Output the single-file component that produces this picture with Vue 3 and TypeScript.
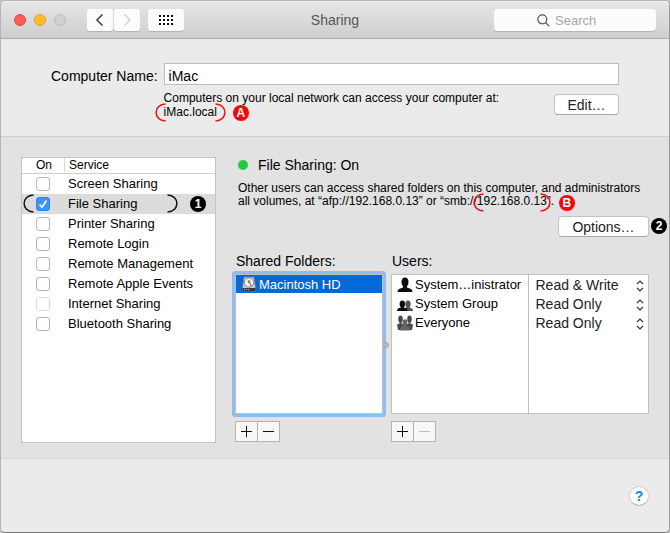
<script setup lang="ts">
import { ref } from 'vue'

interface Service {
  name: string
  on: boolean
  dim?: boolean
}

interface Member {
  name: string
  kind: 'user' | 'group' | 'everyone'
  access: string
}

const computerName = ref('iMac')
const search = ref('')
const selected = ref('File Sharing')
const levels = ['Read & Write', 'Read Only']

const services = ref<Service[]>([
  { name: 'Screen Sharing', on: false },
  { name: 'File Sharing', on: true },
  { name: 'Printer Sharing', on: false },
  { name: 'Remote Login', on: false },
  { name: 'Remote Management', on: false },
  { name: 'Remote Apple Events', on: false },
  { name: 'Internet Sharing', on: false, dim: true },
  { name: 'Bluetooth Sharing', on: false },
])

const members = ref<Member[]>([
  { name: 'System…inistrator', kind: 'user', access: 'Read & Write' },
  { name: 'System Group', kind: 'group', access: 'Read Only' },
  { name: 'Everyone', kind: 'everyone', access: 'Read Only' },
])
</script>

<template>
  <main class="window">
    <header class="titlebar">
      <div class="left-tools">
        <div class="lights">
          <button class="light close" aria-label="Close"></button>
          <button class="light minimize" aria-label="Minimize"></button>
          <button class="light zoom" aria-label="Zoom" disabled></button>
        </div>
        <div class="nav">
          <button class="tool" aria-label="Back">
            <svg width="10" height="14" viewBox="0 0 10 14"><path d="M7.500 1.500 2 7l5.500 5.500" fill="none" stroke="#4a4a4a" stroke-width="1.700" /></svg>
          </button>
          <button class="tool" aria-label="Forward" disabled>
            <svg width="10" height="14" viewBox="0 0 10 14"><path d="M2.500 1.500 8 7l-5.500 5.500" fill="none" stroke="#cfcfcf" stroke-width="1.300" /></svg>
          </button>
        </div>
        <button class="tool wide" aria-label="Show All">
          <svg width="14" height="10" viewBox="0 0 14 10" fill="#111">
            <template v-for="r in 3" :key="r">
              <rect v-for="c in 4" :key="c" :x="(c - 1) * 4" :y="(r - 1) * 4" width="2" height="2" />
            </template>
          </svg>
        </button>
      </div>
      <h1>Sharing</h1>
      <label class="search">
        <svg width="13" height="13" viewBox="0 0 13 13" fill="none" stroke="#555" stroke-width="1.200">
          <circle cx="5.300" cy="5.300" r="4.500" />
          <path d="m8.500 8.500 3.800 3.800" />
        </svg>
        <input v-model="search" type="text" placeholder="Search" aria-label="Search" />
      </label>
    </header>

    <section class="identity">
      <label for="computer-name" class="name-label">Computer Name:</label>
      <div class="name-fields">
        <input id="computer-name" v-model="computerName" type="text" />
        <div class="name-note">
          <p>
            Computers on your local network can access your computer at:<br />
            <span class="marked red">
              iMac.local
              <svg class="arc start" viewBox="0 0 11 19"><path d="M10.500 1C-2 1.500-2 17.500 10.500 18" /></svg>
              <svg class="arc end" viewBox="0 0 11 19"><path d="M.5 1C13 1.500 13 17.500.5 18" /></svg>
              <b class="badge">A</b>
            </span>
          </p>
          <button class="push">Edit…</button>
        </div>
      </div>
    </section>

    <section class="body">
      <div class="services">
        <table>
          <thead>
            <tr><th class="on">On</th><th><span>Service</span></th></tr>
          </thead>
          <tbody>
            <tr v-for="(s, i) in services" :key="s.name" :class="{ current: s.name === selected }" @click="selected = s.name">
              <td class="on">
                <input :id="'service-' + i" v-model="s.on" type="checkbox" :class="{ dim: s.dim }" />
              </td>
              <td>
                <label :for="'service-' + i">{{ s.name }}</label>
                <template v-if="s.name === selected">
                  <svg class="arc start" viewBox="0 0 11 19"><path d="M10.500 1C-2 1.500-2 17.500 10.500 18" /></svg>
                  <svg class="arc end" viewBox="0 0 11 19"><path d="M.5 1C13 1.500 13 17.500.5 18" /></svg>
                  <b class="badge">1</b>
                </template>
              </td>
            </tr>
          </tbody>
        </table>
      </div>

      <div class="detail">
        <h2><i class="status"></i>File Sharing: On</h2>
        <p class="about">
          Other users can access shared folders on this computer, and administrators<br />
          all volumes, at “afp://192.168.0.13” or “smb://<span class="marked red">192.168.0.13<svg class="arc start" viewBox="0 0 11 19"><path d="M10.500 1C-2 1.500-2 17.500 10.500 18" /></svg><svg class="arc end" viewBox="0 0 11 19"><path d="M.5 1C13 1.500 13 17.500.5 18" /></svg><b class="badge">B</b></span>”.
        </p>
        <div class="options">
          <button class="push">Options…</button>
          <b class="badge">2</b>
        </div>

        <div class="panes">
          <div class="folders">
            <h3>Shared Folders:</h3>
            <div class="box focused">
              <button class="folder">
                <svg width="14" height="16" viewBox="0 0 14 16">
                  <path d="M2 1h10l1.500 10v4H.5v-4z" fill="#c9c9c9" stroke="#777" stroke-width=".8" />
                  <path d="M.5 12h13v3H.5z" fill="#353b40" />
                  <ellipse cx="7" cy="6.500" rx="4.600" ry="4.500" fill="#f5f5f5" stroke="#777" stroke-width=".8" />
                  <circle cx="7" cy="5.500" r="1.300" fill="#777" />
                  <path d="m7 6 2.500 4" stroke="#555" />
                  <path d="M2 13.500h6" stroke="#bbb" stroke-dasharray="1 1" />
                </svg>
                Macintosh HD
              </button>
              <i class="grip"></i>
            </div>
            <div class="pair">
              <button aria-label="Add folder"><svg width="11" height="11"><path d="M0 5.500h11M5.500 0v11" /></svg></button>
              <button aria-label="Remove folder"><svg width="11" height="11"><path d="M0 5.500h11" /></svg></button>
            </div>
          </div>

          <div class="users">
            <h3>Users:</h3>
            <div class="box">
              <table>
                <tbody>
                  <tr v-for="m in members" :key="m.name">
                    <td class="who">
                      <div>
                        <svg v-if="m.kind === 'user'" width="16" height="16" viewBox="0 0 16 16" fill="#0a0a0a">
                          <ellipse cx="8" cy="5" rx="3.500" ry="4.500" />
                          <path d="M6 8h4v2.500l4 1.500q1.500.8 1.500 3H.5q0-2.200 1.500-3l4-1.500z" />
                        </svg>
                        <svg v-else-if="m.kind === 'group'" width="16" height="16" viewBox="0 0 16 16">
                          <g fill="#555"><ellipse cx="11" cy="8" rx="2.700" ry="3.500" /><path d="M9.500 10h3v1.500l2.500 1q1 .5 1 2.500H8z" /></g>
                          <g fill="#0a0a0a"><ellipse cx="5.300" cy="8" rx="2.700" ry="3.500" /><path d="M4 10h3v1.500l2.500 1q1 .5 1 2.500H0q0-2 1-2.500l3-1z" /></g>
                        </svg>
                        <svg v-else width="16" height="16" viewBox="0 0 16 16">
                          <g fill="#4a4a4a">
                            <ellipse cx="3.500" cy="4" rx="2.300" ry="3.500" /><ellipse cx="12.500" cy="4" rx="2.300" ry="3.500" />
                            <path d="M2.500 6h2v2.500L7 10v5H1L0 9.500l2.500-1zM11.500 6h2v2.500l2.500 1L15 15H9v-5l2.500-1.500z" />
                          </g>
                          <g fill="#666"><path d="M6.500 9h3v2l2.500 1q1 .5 1 3.500H3q0-3 1-3.500l2.500-1z" /><ellipse cx="8" cy="7.500" rx="2.400" ry="3.200" /></g>
                        </svg>
                        {{ m.name }}
                      </div>
                    </td>
                    <td class="access">
                      <div>
                        <select v-model="m.access" :aria-label="'Access for ' + m.name">
                          <option v-for="l in levels" :key="l">{{ l }}</option>
                        </select>
                        <svg width="8" height="12" viewBox="0 0 8 12"><path d="m1 4 3-3 3 3M1 8l3 3 3-3" fill="none" stroke="#333" stroke-width="1.200" /></svg>
                      </div>
                    </td>
                  </tr>
                  <tr class="rest"><td></td><td class="access"></td></tr>
                </tbody>
              </table>
            </div>
            <div class="pair">
              <button aria-label="Add user"><svg width="11" height="11"><path d="M0 5.500h11M5.500 0v11" /></svg></button>
              <button aria-label="Remove user" disabled><svg width="11" height="11"><path d="M0 5.500h11" /></svg></button>
            </div>
          </div>
        </div>
      </div>
    </section>

    <footer>
      <button class="help" aria-label="Help">?</button>
    </footer>
  </main>
</template>

<style>
body {
  background: #c4c4c4;
}
</style>

<style scoped>
* {
  box-sizing: border-box;
}
.window {
  display: flex;
  flex-direction: column;
  min-height: 100vh;
  border: 1px solid #b4b4b4;
  border-right-color: #999;
  border-bottom-color: #777;
  border-radius: 5px;
  overflow: hidden;
  background: #ebebeb;
  color: #000;
  font-family: "Liberation Sans", Arial, sans-serif;
  font-size: 14px;
}
button,
input,
select {
  margin: 0;
  padding: 0;
  font: inherit;
  color: inherit;
}
h1,
h2,
h3,
p {
  margin: 0;
  font-size: 14px;
  font-weight: normal;
}
table {
  width: 100%;
  border-collapse: collapse;
}
td,
th {
  padding: 0;
  font-weight: normal;
  text-align: left;
}

.titlebar {
  display: grid;
  grid-template-columns: 1fr auto 1fr;
  align-items: center;
  height: 38px;
  padding: 0 13px;
  border-top: 1px solid #f2f2f2;
  border-bottom: 1px solid #acacac;
  background: linear-gradient(#e6e6e6, #cecece);
}
.left-tools {
  display: flex;
  align-items: center;
}
.lights {
  display: flex;
  gap: 8px;
  margin-right: 21px;
}
.light {
  width: 12px;
  height: 12px;
  border: 1px solid;
  border-radius: 50%;
}
.close {
  background: #ff5f57;
  border-color: #e2463f;
}
.minimize {
  background: #ffbd2e;
  border-color: #e0a028;
}
.zoom {
  background: #d0d0d0;
  border-color: #bcbcbc;
}
.nav {
  display: flex;
  gap: 1px;
  margin-right: 8px;
}
.tool {
  display: flex;
  align-items: center;
  justify-content: center;
  width: 26px;
  height: 22px;
  border: 0;
  border-radius: 3px;
  background: #fcfcfc;
  box-shadow: 0 1px 0 #b5b5b5;
}
.wide {
  width: 36px;
}
h1 {
  color: #555;
}
.search {
  justify-self: end;
  display: flex;
  align-items: center;
  justify-content: center;
  gap: 5px;
  width: 162px;
  height: 22px;
  border-radius: 4px;
  background: #fcfcfc;
  box-shadow: 0 1px 0 #b5b5b5;
}
.search input {
  width: 58px;
  border: 0;
  background: none;
  font-size: 13px;
  outline: none;
}
.search input::placeholder {
  color: #a8a8a8;
  opacity: 1;
}

.identity {
  display: flex;
  gap: 6px;
  padding: 24px 50px 17px;
  border-bottom: 1px solid #d0d0d0;
}
.name-label {
  line-height: 26px;
  white-space: nowrap;
}
.name-fields {
  flex: 1;
}
.name-fields input {
  display: block;
  width: 100%;
  height: 22px;
  padding: 3px 4px 0;
  border: 1px solid #bcbcbc;
  background: #fff;
  outline: none;
}
.name-note {
  display: flex;
  justify-content: space-between;
  align-items: flex-start;
  padding-top: 6px;
}
.name-note p {
  font-size: 12px;
  line-height: 14px;
}
.name-note .push {
  width: 65px;
  margin-top: 3px;
}
.push {
  height: 21px;
  border: 1px solid #c2c2c2;
  border-bottom-color: #a8a8a8;
  border-radius: 4px;
  background: #fff;
  color: #222;
  line-height: 18px;
}

.marked {
  position: relative;
  display: inline-block;
}
.arc {
  position: absolute;
  width: 11px;
  height: 19px;
  fill: none;
  stroke: #111;
  stroke-width: 1.5;
}
.red .arc {
  top: -2px;
  stroke: #f50c0c;
}
.red .start {
  left: -9px;
}
.red .end {
  right: -9px;
}
.badge {
  position: absolute;
  width: 16px;
  height: 16px;
  border-radius: 50%;
  background: #000;
  color: #fff;
  font-size: 12px;
  line-height: 16px;
  text-align: center;
}
.red .badge {
  top: 0;
  right: -32px;
  background: #f90505;
}
.about .red .badge {
  right: -28px;
}
.about .red .start {
  left: -4px;
}
.about .red .end {
  right: -4px;
}

.body {
  display: flex;
  align-items: flex-start;
  gap: 19px;
  padding: 18px 20px 15px;
  border-bottom: 1px solid #d8d8d8;
  background: #e2e2e2;
}
.services {
  flex: 0 0 195px;
  min-height: 286px;
  margin-top: 2px;
  border: 1px solid #c4c4c4;
  background: #fff;
}
.services th {
  height: 15px;
  border-bottom: 1px solid #d0d0d0;
  font-size: 12px;
  line-height: 14px;
}
.services th span {
  display: block;
  margin-left: -4px;
  padding-left: 4px;
  border-left: 1px solid #d8d8d8;
}
.services .on {
  width: 46px;
  padding-left: 14px;
}
.services tbody tr {
  position: relative;
  height: 20px;
}
.services tbody td {
  font-size: 13px;
  line-height: 20px;
  height: 20px;
}
.services .current {
  background: #dcdcdc;
}
.services .start {
  top: 0;
  left: 1px;
}
.services .end {
  top: 0;
  right: 37px;
}
.services .badge {
  top: 2px;
  right: 9px;
}
.services input {
  appearance: none;
  display: block;
  width: 14px;
  height: 14px;
  border: 1px solid #b4b4b4;
  border-radius: 3px;
  background: #fff;
}
.services input.dim {
  border-color: #dadada;
}
.services input:checked {
  border-color: #2e86f0;
  background: #3b93f8 url("data:image/svg+xml,%3Csvg xmlns='http://www.w3.org/2000/svg' viewBox='0 0 12 12'%3E%3Cpath d='M2.500 6.500 5 9.200 9.500 2.500' fill='none' stroke='white' stroke-width='1.600'/%3E%3C/svg%3E") center / 12px no-repeat;
}

.detail {
  flex: 1;
  min-width: 0;
}
h2 {
  display: flex;
  align-items: center;
  gap: 10px;
  padding-left: 3px;
  line-height: 20px;
}
.status {
  width: 10px;
  height: 10px;
  border-radius: 50%;
  background: #27c93f;
}
.about {
  padding: 7px 0 0 3px;
  font-size: 12px;
  line-height: 13px;
  white-space: nowrap;
}
.options {
  position: relative;
  display: flex;
  justify-content: flex-end;
  padding-top: 8px;
}
.options .push {
  width: 91px;
}
.options .badge {
  right: -18px;
  top: 10px;
}
.panes {
  display: flex;
  gap: 8px;
  padding-top: 15px;
}
.folders {
  flex: 0 0 148px;
}
.users {
  flex: 1;
}
h3 {
  padding-left: 1px;
  line-height: 18px;
}
.box {
  position: relative;
  height: 140px;
  margin: 4px 0 7px;
  border: 1px solid #c0c0c0;
  background: #fff;
}
.focused {
  border-radius: 1px;
  box-shadow: 0 0 0 3px #8fbdee;
}
.folder {
  display: flex;
  align-items: center;
  gap: 3px;
  width: 100%;
  height: 18px;
  padding-left: 6px;
  border: 0;
  background: #0469d9;
  color: #fff;
  font-size: 13px;
}
.grip {
  position: absolute;
  right: -7px;
  top: 67px;
  width: 6px;
  height: 6px;
  border: 1px solid #a5a5a5;
  border-radius: 50%;
  background: #bebebe;
}
.pair {
  display: flex;
}
.pair button {
  display: flex;
  align-items: center;
  justify-content: center;
  width: 23px;
  height: 21px;
  border: 1px solid #b4b4b4;
  background: #f8f8f8;
}
.pair button + button {
  margin-left: -1px;
}
.pair svg {
  stroke: #111;
}
.pair button:disabled svg {
  stroke: #bdbdbd;
}
.users table {
  height: 138px;
  table-layout: fixed;
}
.users tr {
  height: 19px;
}
.users .rest {
  height: auto;
}
.users td div {
  display: flex;
  align-items: center;
  height: 19px;
  line-height: 19px;
}
.who div {
  gap: 2px;
  padding-left: 5px;
  font-size: 13px;
  white-space: nowrap;
}
.access {
  width: 120px;
  border-left: 1px solid #c0c0c0;
}
.access div {
  justify-content: space-between;
  padding: 2px 4px 0 7px;
}
.access select {
  appearance: none;
  border: 0;
  background: none;
  color: #222;
  line-height: 17px;
}

footer {
  display: flex;
  flex: 1;
  align-items: center;
  justify-content: flex-end;
  padding: 0 20px;
}
.help {
  width: 20px;
  height: 20px;
  border: 1px solid #d0d0d0;
  border-bottom-color: #aaa;
  border-radius: 50%;
  background: #fff;
  color: #0a84ff;
  font-size: 14px;
  font-weight: bold;
  line-height: 18px;
}
</style>
